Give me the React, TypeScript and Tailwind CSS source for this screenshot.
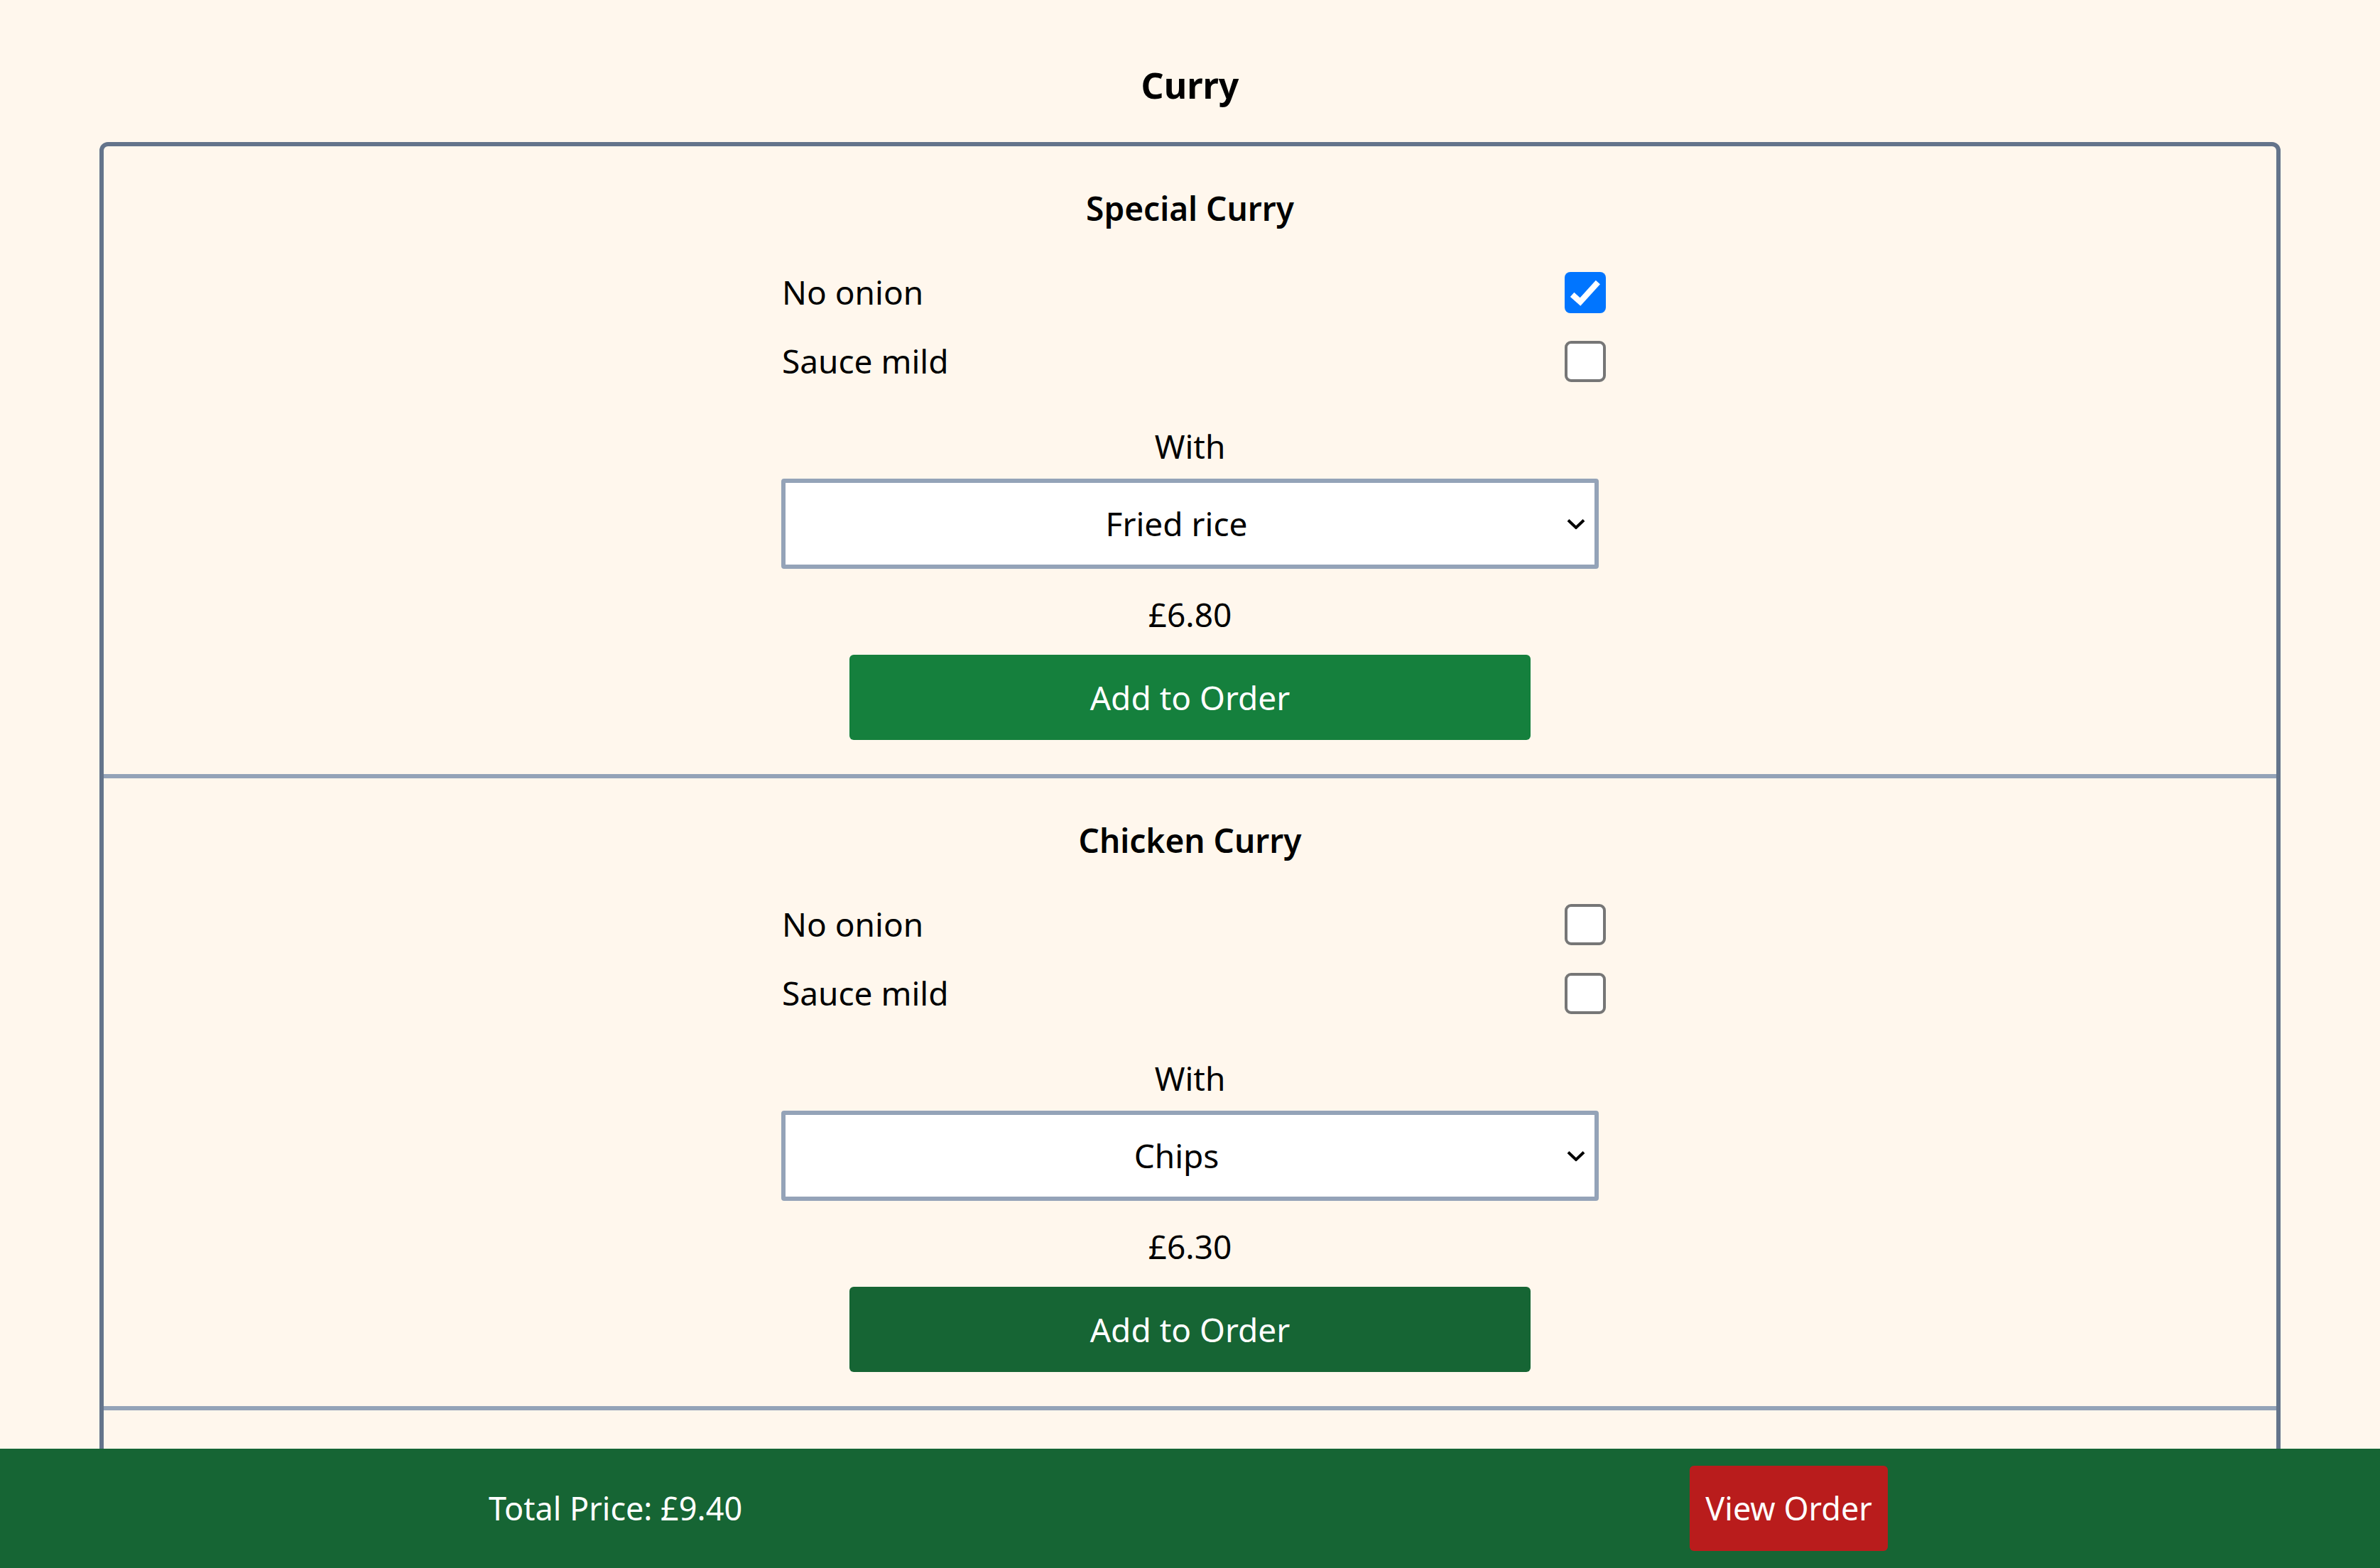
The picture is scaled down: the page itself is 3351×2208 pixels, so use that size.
import React, { useState } from 'react';

type Dish = {
  name: string;
  side: string;
  price: string;
  button: string;
  noOnion: boolean;
};

const sides = ['Fried rice', 'Boiled rice', 'Chips'];

const dishes: Dish[] = [
  { name: 'Special Curry', side: 'Fried rice', price: '£6.80', button: 'bg-[#15803d]', noOnion: true },
  { name: 'Chicken Curry', side: 'Chips', price: '£6.30', button: 'bg-[#166534]', noOnion: false },
];

const Checkbox = ({ checked, onChange }: { checked: boolean; onChange: () => void }) => (
  <button
    type="button"
    onClick={onChange}
    className={
      checked
        ? 'flex h-[58px] w-[58px] items-center justify-center rounded-[8px] bg-[#0075ff]'
        : 'flex h-[58px] w-[58px] items-center justify-center rounded-[9px] border-[4px] border-[#767676] bg-white'
    }
  >
    {checked && (
      <svg viewBox="0 0 24 24" className="h-[58px] w-[58px]">
        <path d="M4.4 13.2 L9.1 17.4 L19.4 6" fill="none" stroke="white" strokeWidth="3.4" strokeLinejoin="miter" />
      </svg>
    )}
  </button>
);

const DishCard = ({ dish }: { dish: Dish }) => {
  const [noOnion, setNoOnion] = useState(dish.noOnion);
  const [mild, setMild] = useState(false);
  const [side, setSide] = useState(dish.side);

  return (
    <div className="flex flex-col items-center border-b-[6px] border-[#94a3b8] pt-[51px] pb-[48px]">
      <h3 className="h-[72px] text-[46px] font-semibold leading-[72px]">{dish.name}</h3>

      {/* options */}
      <div className="mt-[34px] ml-[11px] w-[1160px]">
        <div className="flex h-[97px] items-center justify-between">
          <span className="text-[46px]">No onion</span>
          <Checkbox checked={noOnion} onChange={() => setNoOnion(!noOnion)} />
        </div>
        <div className="flex h-[97px] items-center justify-between">
          <span className="text-[46px]">Sauce mild</span>
          <Checkbox checked={mild} onChange={() => setMild(!mild)} />
        </div>
      </div>

      <p className="mt-[35px] h-[72px] text-[46px] leading-[72px]">With</p>
      <div className="relative mt-[10px] w-[1151px]">
        <select
          value={side}
          onChange={(e) => setSide(e.target.value)}
          className="h-[127px] w-full appearance-none rounded-[4px] border-[6px] border-[#94a3b8] bg-white pr-[38px] text-center text-[46px] text-black [text-align-last:center]"
        >
          {sides.map((s) => (
            <option key={s} value={s}>
              {s}
            </option>
          ))}
        </select>
        <svg
          viewBox="0 0 26 15"
          className="pointer-events-none absolute top-1/2 right-[19px] h-[15px] w-[26px] -translate-y-1/2"
        >
          <path d="M2 2 L13 12.5 L24 2" fill="none" stroke="black" strokeWidth="4" />
        </svg>
      </div>

      <p className="mt-[28px] h-[72px] text-[46px] leading-[72px]">{dish.price}</p>
      <button className={`mt-[21px] h-[120px] w-[959px] rounded-[6px] text-[46px] text-white ${dish.button}`}>
        Add to Order
      </button>
    </div>
  );
};

export default function App() {
  return (
    <div className="flex h-screen flex-col bg-[#fff7ed] font-['Noto_Sans',sans-serif] text-black">
      <main className="flex-1 overflow-hidden">
        <h2 className="mt-[84px] h-[72px] text-center text-[50px] font-bold leading-[72px]">Curry</h2>
        <div className="mx-[140px] mt-[44px] rounded-[12px] border-[6px] border-[#64748b]">
          {dishes.map((dish) => (
            <DishCard key={dish.name} dish={dish} />
          ))}
          {/* rest of the list continues below the footer */}
          <div className="h-[200px]" />
        </div>
      </main>

      <footer className="flex h-[168px] shrink-0 items-center justify-around bg-[#166534] pl-[21px] pr-[26px]">
        <p className="text-[45px] text-white">Total Price: £9.40</p>
        <button className="h-[120px] rounded-[6px] bg-[#b91c1c] px-[22px] text-[45px] text-white">View Order</button>
      </footer>
    </div>
  );
}
